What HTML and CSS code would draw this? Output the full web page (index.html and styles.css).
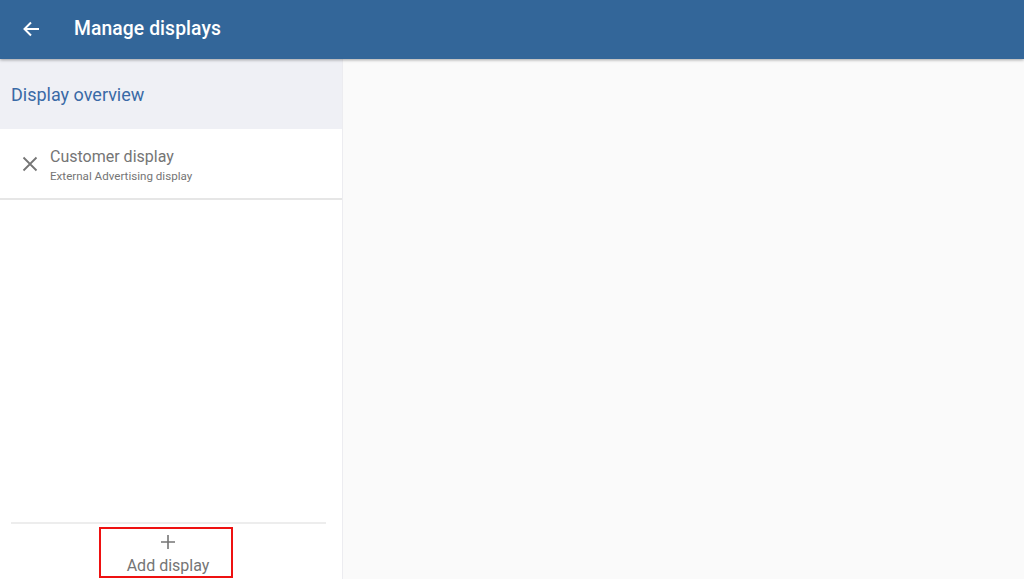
FILE: index.html
```html
<!DOCTYPE html>
<html>
<head>
<meta charset="utf-8">
<link rel="stylesheet" href="styles.css">
</head>
<body>
<header class="appbar">
  <span class="back">
    <svg width="18" height="18" viewBox="0 0 18 18"><path d="M17 9H3M9 2.5L2.5 9 9 15.5" fill="none" stroke="#fff" stroke-width="2"/></svg>
  </span>
  <h1 class="title">Manage displays</h1>
</header>
<main class="layout">
  <aside class="sidebar">
    <div class="side-head">Display overview</div>
    <div class="item">
      <span class="item-icon">
        <svg width="16" height="16" viewBox="0 0 16 16"><path d="M1.5 1.5L14.5 14.5M14.5 1.5L1.5 14.5" stroke="#757575" stroke-width="1.8" fill="none"/></svg>
      </span>
      <div class="item-text">
        <div class="item-title">Customer display</div>
        <div class="item-sub">External Advertising display</div>
      </div>
    </div>
    <div class="spacer"></div>
    <div class="footer">
      <div class="add">
        <svg width="16" height="16" viewBox="0 0 16 16"><path d="M8 1V15M1 8H15" stroke="#757575" stroke-width="1.6" fill="none"/></svg>
        <span class="add-label">Add display</span>
      </div>
    </div>
  </aside>
  <section class="content"></section>
</main>
</body>
</html>
```
FILE: styles.css
```css
* { box-sizing: border-box; }
html, body { margin: 0; height: 100%; }
body {
  font-family: Roboto, "Liberation Sans", Arial, sans-serif;
  background: #fafafa;
  overflow: hidden;
  width: 1024px;
  height: 579px;
  display: flex;
  flex-direction: column;
}
.appbar {
  height: 59px;
  flex: none;
  background: #336699;
  display: flex;
  align-items: center;
  box-shadow: 0 1px 3px rgba(0,0,0,0.35);
  position: relative;
  z-index: 2;
}
.back {
  width: 18px;
  height: 18px;
  margin-left: 22px;
  display: flex;
  margin-top: -2px;
}
.title {
  margin: -2px 0 0 34px;
  color: #fff;
  font-size: 19.3px;
  font-weight: 500;
  letter-spacing: 0.1px;
}
.layout {
  flex: 1;
  display: flex;
  min-height: 0;
}
.sidebar {
  width: 343px;
  flex: none;
  background: #fff;
  border-right: 1px solid #ececf0;
  display: flex;
  flex-direction: column;
}
.side-head {
  height: 70px;
  background: #eff0f5;
  color: #3a6aa6;
  font-size: 18px;
  display: flex;
  align-items: center;
  padding-left: 11px;
  flex: none;
}
.item {
  height: 71px;
  display: flex;
  align-items: center;
  border-bottom: 2px solid #e6e6e6;
  flex: none;
}
.item-icon {
  width: 16px;
  height: 16px;
  margin-left: 22px;
  margin-right: 12px;
  display: flex;
  margin-top: 0;
}
.item-text { margin-top: 2px; }
.item-title {
  font-size: 16px;
  color: #757575;
  line-height: 19px;
}
.item-sub {
  font-size: 11.6px;
  color: #757575;
  line-height: 14px;
  margin-top: 3px;
}
.spacer { flex: 1; }
.footer {
  margin: 0 16px 0 11px;
  border-top: 2px solid #ededed;
  display: flex;
  justify-content: center;
  padding: 3px 0 1px 0;
}
.add {
  width: 134px;
  height: 51px;
  border: 2px solid #ee1111;
  display: flex;
  flex-direction: column;
  align-items: center;
  padding-top: 5px;
  padding-left: 4px;
  margin-left: -5px;
}
.add-label {
  font-size: 16px;
  color: #757575;
  margin-top: 6px;
  line-height: 19px;
}
.content {
  flex: 1;
  background: #fafafa;
}
```
